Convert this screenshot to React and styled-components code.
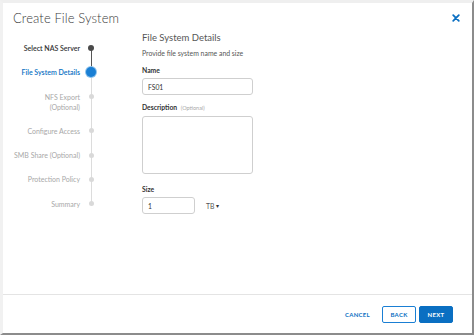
import React from "react";
import styled, { createGlobalStyle } from "styled-components";

const steps = [
  { label: "Select NAS Server", state: "done" },
  { label: "File System Details", state: "active" },
  { label: ["NFS Export", "(Optional)"], state: "todo" },
  { label: "Configure Access", state: "todo" },
  { label: "SMB Share (Optional)", state: "todo" },
  { label: "Protection Policy", state: "todo" },
  { label: "Summary", state: "todo" },
];

const App = () => {
  return (
    <>
      <GlobalStyle />
      <Frame>
        <Header>
          <Title>Create File System</Title>
          <Close aria-label="close">
            <svg width="8" height="8" viewBox="0 0 10 10">
              <path d="M1.5 1.5 L8.5 8.5 M8.5 1.5 L1.5 8.5" stroke="#0a6fc2" strokeWidth="2.2" strokeLinecap="round" />
            </svg>
          </Close>
        </Header>
        <Body>
          {/* wizard steps */}
          <Steps>
            {steps.map((step, index) => {
              const lines = Array.isArray(step.label) ? step.label : [step.label];
              const next = steps[index + 1];
              return (
                <Step key={index}>
                  <StepLabel $state={step.state}>
                    {lines.map((l, i) => (
                      <div key={i}>{l}</div>
                    ))}
                  </StepLabel>
                  <Marker $last={!next} $lineDark={step.state === "done"}>
                    <Dot $state={step.state} />
                  </Marker>
                </Step>
              );
            })}
          </Steps>
          {/* form */}
          <Form onSubmit={(e) => e.preventDefault()}>
            <Heading>File System Details</Heading>
            <Hint>Provide file system name and size</Hint>
            <Field $top={7}>
              <Label>Name</Label>
              <Input type="text" defaultValue="FS01" $width={111} />
            </Field>
            <Field $top={7}>
              <Label>
                Description <Optional>(Optional)</Optional>
              </Label>
              <TextArea />
            </Field>
            <Field $top={10}>
              <Label>Size</Label>
              <SizeRow>
                <Input type="text" defaultValue="1" $width={53} />
                <Unit>
                  TB <Caret>▾</Caret>
                </Unit>
              </SizeRow>
            </Field>
          </Form>
        </Body>
        <Footer>
          <FlatButton type="button">Cancel</FlatButton>
          <Button type="button">Back</Button>
          <Button type="button" $primary>
            Next
          </Button>
        </Footer>
      </Frame>
    </>
  );
};

const GlobalStyle = createGlobalStyle`
  html, body {
    margin: 0;
    padding: 0;
    background: #fff;
  }
  body {
    font-family: "Lato", "Open Sans", sans-serif;
    color: #565656;
  }
  * {
    box-sizing: border-box;
  }
`;

const Frame = styled.div`
  width: 474px;
  height: 335px;
  display: flex;
  flex-direction: column;
  background: #fff;
  border-top: 3px solid #efefef;
  border-left: 3px solid #f1f1f1;
  border-right: 2px solid #8c8c8c;
  border-bottom: 2px solid #8c8c8c;
`;

const Header = styled.header`
  height: 29px;
  display: flex;
  align-items: center;
  justify-content: space-between;
  padding: 0 12px 0 10px;
`;

const Title = styled.h1`
  margin: 0;
  font-size: 13px;
  font-weight: 300;
  color: #3c3c3c;
  letter-spacing: 0.1px;
`;

const Close = styled.button`
  border: none;
  background: transparent;
  padding: 0;
  display: flex;
  cursor: pointer;
`;

const Body = styled.div`
  flex: 1;
  display: flex;
  border-bottom: 1px solid #e4e4e4;
`;

const Steps = styled.ol`
  list-style: none;
  margin: 11px 0 0 0;
  padding: 0;
  width: 99px;
`;

const Step = styled.li`
  display: flex;
  align-items: stretch;
`;

const StepLabel = styled.div`
  width: 77px;
  text-align: right;
  font-size: 7px;
  line-height: 10px;
  padding-bottom: 14.3px;
  color: ${(p) =>
    p.$state === "active" ? "#0a6fc2" : p.$state === "done" ? "#333" : "#a8a8a8"};
  font-weight: ${(p) => (p.$state === "todo" ? 400 : 600)};
`;

const Marker = styled.div`
  position: relative;
  width: 22px;
  display: flex;
  justify-content: center;
  &::before {
    content: "";
    display: ${(p) => (p.$last ? "none" : "block")};
    position: absolute;
    left: 10.5px;
    top: 5px;
    width: 1px;
    height: 100%;
    background: ${(p) => (p.$lineDark ? "#565656" : "#dcdcdc")};
  }
`;

const Dot = styled.span`
  position: relative;
  z-index: 1;
  margin-top: ${(p) => (p.$state === "active" ? "0px" : p.$state === "done" ? "2px" : "2.5px")};
  width: ${(p) => (p.$state === "active" ? "10px" : p.$state === "done" ? "6px" : "5px")};
  height: ${(p) => (p.$state === "active" ? "10px" : p.$state === "done" ? "6px" : "5px")};
  border-radius: 50%;
  background: ${(p) =>
    p.$state === "active" ? "#1a7fd4" : p.$state === "done" ? "#4a4a4a" : "#d9d9d9"};
  box-shadow: ${(p) => (p.$state === "active" ? "0 0 0 1px #8cc2ec" : "none")};
`;

const Form = styled.form`
  margin-left: 40px;
  display: flex;
  flex-direction: column;
  align-items: flex-start;
`;

const Heading = styled.h2`
  margin: 0;
  font-size: 9.5px;
  line-height: 12px;
  font-weight: 400;
  color: #565656;
`;

const Hint = styled.p`
  margin: 4px 0 0;
  font-size: 6.9px;
  line-height: 10px;
  color: #565656;
`;

const Field = styled.div`
  margin-top: ${(p) => p.$top}px;
  display: flex;
  flex-direction: column;
`;

const Label = styled.label`
  font-size: 6.8px;
  line-height: 10px;
  font-weight: 700;
  color: #333;
  margin-bottom: 3px;
`;

const Optional = styled.span`
  font-weight: 400;
  font-size: 5.5px;
  color: #a8a8a8;
  margin-left: 2px;
`;

const Input = styled.input`
  width: ${(p) => p.$width}px;
  height: 17px;
  border: 1px solid #cfcfcf;
  border-radius: 3px;
  padding: 0 5px;
  font-family: inherit;
  font-size: 6.8px;
  color: #333;
  background: #fff;
  outline: none;
`;

const TextArea = styled.textarea`
  width: 111px;
  height: 58px;
  border: 1px solid #cfcfcf;
  border-radius: 3px;
  resize: none;
  outline: none;
  font-family: inherit;
`;

const SizeRow = styled.div`
  display: flex;
  align-items: center;
  gap: 11px;
`;

const Unit = styled.span`
  font-size: 6.8px;
  color: #565656;
  display: flex;
  align-items: center;
  gap: 2px;
`;

const Caret = styled.span`
  font-size: 6px;
  color: #333;
`;

const Footer = styled.footer`
  height: 38px;
  display: flex;
  align-items: center;
  justify-content: flex-end;
  gap: 3px;
  padding-right: 19px;
`;

const Button = styled.button`
  height: 17px;
  width: 34px;
  padding: 0;
  border-radius: 2px;
  border: 1px solid ${(p) => (p.$primary ? "#0a6fc2" : "#1a7fd4")};
  background: ${(p) => (p.$primary ? "#0a6fc2" : "#fff")};
  color: ${(p) => (p.$primary ? "#fff" : "#0a6fc2")};
  font-family: inherit;
  font-size: 6px;
  font-weight: 700;
  letter-spacing: 0.3px;
  text-transform: uppercase;
  cursor: pointer;
`;

const FlatButton = styled(Button)`
  border-color: transparent;
  width: auto;
  padding: 0 5px;
  margin-right: 3px;
`;

export default App;
